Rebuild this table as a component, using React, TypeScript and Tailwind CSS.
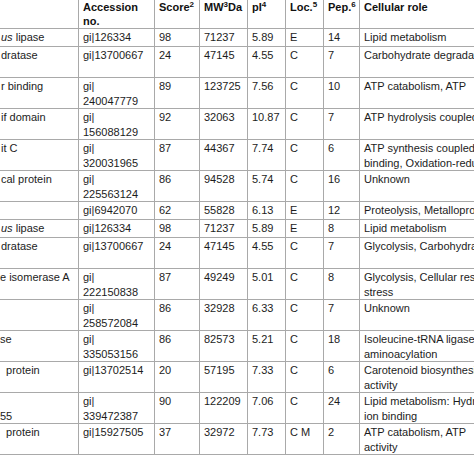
import { ReactNode } from "react";

type Row = {
    name: ReactNode;
    namePad?: string;
    acc: ReactNode;
    score: string;
    mw: string;
    pi: string;
    loc: string;
    pep: string;
    role: ReactNode;
    tall?: boolean;
};

const rows: Row[] = [
    { name: <><i>us</i> lipase</>, acc: "gi|126334", score: "98", mw: "71237", pi: "5.89", loc: "E", pep: "14", role: "Lipid metabolism" },
    { name: "dratase", acc: "gi|13700667", score: "24", mw: "47145", pi: "4.55", loc: "C", pep: "7", role: "Carbohydrate degradation", tall: true },
    { name: "r binding", acc: <>gi|<br />240047779</>, score: "89", mw: "123725", pi: "7.56", loc: "C", pep: "10", role: "ATP catabolism, ATP", tall: true },
    { name: "if domain", acc: <>gi|<br />156088129</>, score: "92", mw: "32063", pi: "10.87", loc: "C", pep: "7", role: "ATP hydrolysis coupled", tall: true },
    { name: "it C", acc: <>gi|<br />320031965</>, score: "87", mw: "44367", pi: "7.74", loc: "C", pep: "6", role: <>ATP synthesis coupled<br />binding, Oxidation-reduction</>, tall: true },
    { name: "cal protein", acc: <>gi|<br />225563124</>, score: "86", mw: "94528", pi: "5.74", loc: "C", pep: "16", role: "Unknown", tall: true },
    { name: "", acc: "gi|6942070", score: "62", mw: "55828", pi: "6.13", loc: "E", pep: "12", role: "Proteolysis, Metalloprotease" },
    { name: <><i>us</i> lipase</>, acc: "gi|126334", score: "98", mw: "71237", pi: "5.89", loc: "E", pep: "8", role: "Lipid metabolism" },
    { name: "dratase", acc: "gi|13700667", score: "24", mw: "47145", pi: "4.55", loc: "C", pep: "7", role: "Glycolysis, Carbohydrate", tall: true },
    { name: "e isomerase A", namePad: "pl-0", acc: <>gi|<br />222150838</>, score: "87", mw: "49249", pi: "5.01", loc: "C", pep: "8", role: <>Glycolysis, Cellular response<br />stress</>, tall: true },
    { name: "", acc: <>gi|<br />258572084</>, score: "86", mw: "32928", pi: "6.33", loc: "C", pep: "7", role: "Unknown", tall: true },
    { name: "se", namePad: "pl-0", acc: <>gi|<br />335053156</>, score: "86", mw: "82573", pi: "5.21", loc: "C", pep: "18", role: <>Isoleucine-tRNA ligase<br />aminoacylation</>, tall: true },
    { name: " protein", namePad: "pl-[3px]", acc: "gi|13702514", score: "20", mw: "57195", pi: "7.33", loc: "C", pep: "6", role: <>Carotenoid biosynthesis<br />activity</>, tall: true },
    { name: <><br />55</>, namePad: "pl-0", acc: <>gi|<br />339472387</>, score: "90", mw: "122209", pi: "7.06", loc: "C", pep: "24", role: <>Lipid metabolism: Hydrolase<br />ion binding</>, tall: true },
    { name: " protein", namePad: "pl-[3px]", acc: "gi|15927505", score: "37", mw: "32972", pi: "7.73", loc: "C M", pep: "2", role: <>ATP catabolism, ATP<br />activity</>, tall: true },
];

const cell = "shrink-0 border-l border-[#a9a9a9] pl-[4px] overflow-hidden whitespace-nowrap";

function TableRow({ r }: { r: Row }) {
    return (
        <div className={`flex border-b border-[#a9a9a9] leading-[15px] ${r.tall ? "h-[31px]" : "h-[18px]"}`}>
            <div className={`shrink-0 w-[78px] pt-[1px] overflow-hidden whitespace-pre ${r.namePad ?? "pl-[1px]"}`}>{r.name}</div>
            <div className={`${cell} w-[76px] pl-[3px] pt-[1px]`}>{r.acc}</div>
            <div className={`${cell} w-[45px] pt-[1px]`}>{r.score}</div>
            <div className={`${cell} w-[48px] pt-[1px]`}>{r.mw}</div>
            <div className={`${cell} w-[38px] pt-[1px]`}>{r.pi}</div>
            <div className={`${cell} w-[38px] pl-[3px] pt-[1px]`}>{r.loc}</div>
            <div className={`${cell} w-[36px] pl-[3px] pt-[1px]`}>{r.pep}</div>
            <div className={`${cell} w-[300px] pl-[3px] pt-[1px]`}>{r.role}</div>
        </div>
    );
}

export default function App() {
    return (
        <div className="w-[474px] h-[474px] overflow-hidden bg-white text-[#1c1c1c] text-[11px] leading-[14px] font-['Liberation_Sans',Arial,sans-serif]">
            <div className="w-[700px] mt-[-2px]">
                <div className="flex h-[31px] border-b border-[#a9a9a9] font-bold text-[#111]">
                    <div className="shrink-0 w-[78px]" />
                    <div className={`${cell} w-[76px] pl-[3px] pt-[2px]`}>Accession<br />no.</div>
                    <div className={`${cell} w-[45px] pt-[2px]`}>Score<sup className="text-[8px]">2</sup></div>
                    <div className={`${cell} w-[48px] pt-[2px]`}>MW<sup className="text-[8px]">3</sup>Da</div>
                    <div className={`${cell} w-[38px] pt-[2px]`}>pI<sup className="text-[8px]">4</sup></div>
                    <div className={`${cell} w-[38px] pl-[3px] pt-[2px]`}>Loc.<sup className="text-[8px]">5</sup></div>
                    <div className={`${cell} w-[36px] pl-[3px] pt-[2px]`}>Pep.<sup className="text-[8px]">6</sup></div>
                    <div className={`${cell} w-[300px] pl-[3px] pt-[2px]`}>Cellular role</div>
                </div>
                {rows.map((r, i) => (
                    <TableRow key={i} r={r} />
                ))}
            </div>
        </div>
    );
}
